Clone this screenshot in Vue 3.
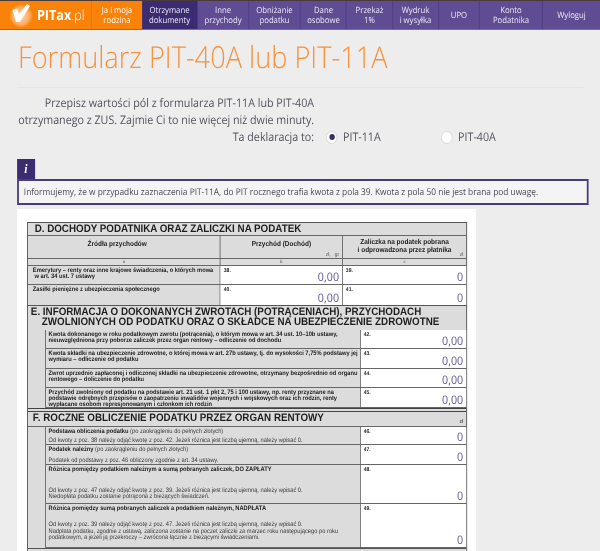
<script setup>
const nav = [
  { t: ['Ja i moja', 'rodzina'], w: 50, c: 'orange' },
  { t: ['Otrzymane', 'dokumenty'], w: 56, c: 'active' },
  { t: ['Inne', 'przychody'], w: 51 },
  { t: ['Obniżanie', 'podatku'], w: 52 },
  { t: ['Dane', 'osobowe'], w: 46 },
  { t: ['Przekaż', '1%'], w: 46 },
  { t: ['Wydruk', 'i wysyłka'], w: 46 },
  { t: ['UPO'], w: 41 },
  { t: ['Konto', 'Podatnika'], w: 63 },
  { t: ['Wyloguj'], w: 58 },
]
const rowsE = [
  { h: 19, n: '42.', v: '0,00', l: ['Kwota dokonanego w roku podatkowym zwrotu (potrącenia), o którym mowa w art. 34 ust. 10–10b ustawy,', 'nieuwzględniona przy poborze zaliczek przez organ rentowy – odliczenie od dochodu'] },
  { h: 20, n: '43.', v: '0,00', l: ['Kwota składki na ubezpieczenie zdrowotne, o której  mowa w art. 27b ustawy, tj. do wysokości 7,75% podstawy jej', 'wymiaru – odliczenie od podatku'] },
  { h: 19, n: '44.', v: '0,00', l: ['Zwrot uprzednio zapłaconej i odliczonej składki na ubezpieczenie zdrowotne, otrzymany bezpośrednio od organu', 'rentowego – doliczenie do podatku'] },
  { h: 20, n: '45.', v: '0,00', l: ['Przychód zwolniony od podatku na podstawie art. 21 ust. 1 pkt 2, 75 i 100 ustawy, np. renty przyznane na', 'podstawie odrębnych przepisów o zaopatrzeniu inwalidów wojennych i wojskowych oraz ich rodzin, renty', 'wypłacane osobom represjonowanym i członkom ich rodzin'] },
]
</script>

<template>
  <div class="viewport">
    <div class="page">
      <header class="nav">
        <div class="logo">
          <svg class="mark" width="33" height="28" viewBox="0 0 33 28">
            <defs>
              <radialGradient id="glow">
                <stop offset="0" stop-color="#fff" stop-opacity=".7" />
                <stop offset=".7" stop-color="#fff" stop-opacity=".35" />
                <stop offset="1" stop-color="#fff" stop-opacity="0" />
              </radialGradient>
            </defs>
            <ellipse cx="16.3" cy="15" rx="13.3" ry="12" fill="url(#glow)" />
            <path d="M6.9 9 L11.9 7.5 L14.1 13 L23 3 L26.3 5 L15.2 21 L10.8 21 Z" fill="#fff" />
          </svg>
          <span class="brand"><b>PITax</b><i>.pl</i></span>
        </div>
        <a v-for="n in nav" :key="n.t[0]" class="item" :class="n.c" :style="{ width: n.w / 0.9 + 'px' }">
          <span v-for="l in n.t" :key="l">{{ l }}</span>
        </a>
      </header>

      <main>
        <h1 class="title">Formularz PIT-40A lub PIT-11A</h1>
        <div class="rule"></div>

        <div class="intro">
          <p>Przepisz wartości pól z formularza PIT-11A lub PIT-40A</p>
          <p>otrzymanego z ZUS. Zajmie Ci to nie więcej niż dwie minuty.</p>
          <div class="choice">
            <span class="label">Ta deklaracja to:</span>
            <span class="radio on"></span><span class="opt first">PIT-11A</span>
            <span class="radio"></span><span class="opt">PIT-40A</span>
          </div>
        </div>

        <div class="badge">i</div>
        <div class="info">Informujemy, że w przypadku zaznaczenia PIT-11A, do PIT rocznego trafia kwota z pola 39. Kwota z pola 50 nie jest brana pod uwagę.</div>

        <section class="sheet">
          <div class="form">
            <div class="sec d">D. DOCHODY PODATNIKA ORAZ ZALICZKI NA PODATEK</div>

            <div class="r3 head">
              <div class="c1"><b>Źródła przychodów</b></div>
              <div class="c2"><b>Przychód (Dochód)</b><span class="unit">zł, &nbsp; gr</span></div>
              <div class="c3"><b>Zaliczka na podatek pobrana<br>i odprowadzona przez płatnika</b><span class="unit">zł</span></div>
            </div>
            <div class="r3 letters">
              <div class="c1">a</div><div class="c2">b</div><div class="c3">c</div>
            </div>
            <div class="r3 data h19">
              <div class="c1 desc ind"><b>Emerytury – renty oraz inne krajowe świadczenia, o których mowa<br>&nbsp;w art. 34 ust. 7 ustawy</b></div>
              <div class="c2 val"><em>38.</em><span class="num">0,00</span></div>
              <div class="c3 val"><em>39.</em><span class="num">0</span></div>
            </div>
            <div class="r3 data h20">
              <div class="c1 desc ind"><b>Zasiłki pieniężne z ubezpieczenia społecznego</b></div>
              <div class="c2 val"><em>40.</em><span class="num">0,00</span></div>
              <div class="c3 val"><em>41.</em><span class="num">0</span></div>
            </div>

            <div class="sec e">E. INFORMACJA O DOKONANYCH ZWROTACH (POTRĄCENIACH), PRZYCHODACH<br><span class="sub">ZWOLNIONYCH OD PODATKU ORAZ O SKŁADCE NA UBEZPIECZENIE ZDROWOTNE</span></div>
            <div class="block">
              <div v-for="r in rowsE" :key="r.n" class="r2" :class="'h' + r.h">
                <div class="lhs desc"><b v-for="t in r.l" :key="t">{{ t }}</b></div>
                <div class="rhs val"><em>{{ r.n }}</em><span class="num">{{ r.v }}</span></div>
              </div>
            </div>

            <div class="sec f">F. ROCZNE OBLICZENIE PODATKU PRZEZ ORGAN RENTOWY<span class="unit">zł</span></div>
            <div class="block">
              <div class="r2 h18">
                <div class="lhs desc spread"><span><b>Podstawa obliczenia podatku</b> (po zaokrągleniu do pełnych złotych)</span><span>Od kwoty z poz. 38 należy odjąć kwotę z poz. 42. Jeżeli różnica jest liczbą ujemną, należy wpisać 0.</span></div>
                <div class="rhs val"><em>46.</em><span class="num">0</span></div>
              </div>
              <div class="r2 h20">
                <div class="lhs desc spread"><span><b>Podatek należny</b> (po zaokrągleniu do pełnych złotych)</span><span>Podatek od podstawy z poz. 46 obliczony zgodnie z art. 34 ustawy.</span></div>
                <div class="rhs val"><em>47.</em><span class="num">0</span></div>
              </div>
              <div class="r2 h39">
                <div class="lhs desc spread"><span><b>Różnica pomiędzy podatkiem należnym a sumą pobranych zaliczek, DO ZAPŁATY</b></span><span>Od kwoty z poz. 47 należy odjąć kwotę z poz. 39. Jeżeli różnica jest liczbą ujemną, należy wpisać 0.<br>Niedopłata podatku zostanie potrącona z bieżących świadczeń.</span></div>
                <div class="rhs val"><em>48.</em><span class="num">0</span></div>
              </div>
              <div class="r2 h44">
                <div class="lhs desc spread"><span><b>Różnica pomiędzy sumą pobranych zaliczek a podatkiem należnym, NADPŁATA</b></span><span>Od kwoty z poz. 39 należy odjąć kwotę z poz. 47. Jeżeli różnica jest liczbą ujemną, należy wpisać 0.<br>Nadpłata podatku, zgodnie z ustawą, zaliczona zostanie na poczet zaliczki za marzec roku następującego po roku<br>podatkowym, a jeżeli ją przekroczy – zwrócona łącznie z bieżącymi świadczeniami.</span></div>
                <div class="rhs val"><em>49.</em><span class="num">0</span></div>
              </div>
            </div>
            <div class="tail"></div>
          </div>
        </section>
      </main>
    </div>
  </div>
</template>

<style>
html, body { margin: 0; background: #ededed; }
</style>

<style scoped>
.viewport {
  width: 600px;
  height: 551px;
  overflow: hidden;
  background: #ededed;
}
.page {
  width: 666.67px;
  height: 551px;
  transform: scaleX(0.9);
  transform-origin: 0 0;
  font-family: "Open Sans", sans-serif;
  text-rendering: geometricPrecision;
  filter: blur(0.35px);
}
.nav {
  display: flex;
  height: 30px;
  border-top: 1px solid #4a3a3a;
  box-sizing: border-box;
  background: #5f4c92;
  border-bottom: 1px solid #7b6aa8;
}
.logo {
  width: 102.2px;
  flex: none;
  background: #fa8208;
  display: flex;
  align-items: center;
  gap: 1px;
  padding-left: 7px;
  box-sizing: border-box;
}
.mark { flex: none; }
.brand { color: #fff; font-size: 14px; white-space: nowrap; }
.brand b { font-weight: 700; }
.brand i { font-style: normal; font-weight: 300; }
.item {
  flex: none;
  box-sizing: border-box;
  display: flex;
  flex-direction: column;
  align-items: center;
  justify-content: center;
  padding-top: 1px;
  color: #ece8f4;
  font-size: 8.6px;
  line-height: 9.6px;
  border-right: 1px solid #4f3e85;
  white-space: nowrap;
}
.item.orange { background: #fa8208; color: #fff; border-right: none; }
.item.active { background: #3b2b70; }
.title {
  margin: 0;
  padding: 6.6px 0 0 20px;
  font-size: 30.2px;
  line-height: 40px;
  font-weight: 300;
  color: #f8923c;
}
.rule { height: 1px; background: #e4e4e4; margin: 10.4px 19px 0; }
.intro { margin-top: 7.5px; width: 349px; height: 50.4px; text-align: right; color: #55525f; font-size: 11.9px; line-height: 16.8px; }
.intro p { margin: 0; white-space: nowrap; }
.choice { display: flex; align-items: center; white-space: nowrap; width: 600px; }
.label { flex: none; width: 349px; text-align: right; }
.radio {
  flex: none;
  box-sizing: border-box;
  width: 13px;
  height: 13px;
  margin-left: 13.4px;
  border-radius: 50%;
  background: #fff;
  border: 1px solid #d8d8d8;
  display: flex;
  align-items: center;
  justify-content: center;
}
.radio.on::after { content: ""; width: 6px; height: 6px; border-radius: 50%; background: #3b2b70; }
.opt { flex: none; margin-left: 5.7px; text-align: left; }
.opt.first { width: 95.8px; }
.badge {
  margin: 13.1px 0 0 18.9px;
  width: 20px;
  height: 20px;
  background: #3b2b70;
  color: #fff;
  font: italic 700 13px/20px "Liberation Serif", serif;
  text-align: center;
}
.info {
  margin-left: 18.9px;
  width: 635.6px;
  height: 26px;
  box-sizing: border-box;
  border: 2px solid #4a3b7c;
  background: #f4f4f4;
  color: #4c4a57;
  font-size: 9.27px;
  line-height: 22px;
  padding-left: 5.6px;
  white-space: nowrap;
}
.sheet {
  margin: 4px 0 0 18.9px;
  width: 510px;
  height: 346px;
  background: #fff;
  padding: 13px 0 0 11.1px;
  box-sizing: border-box;
}
.form {
  width: 489px;
  box-sizing: border-box;
  border: 1px solid #555;
  border-bottom: none;
  background: #dcdcdc;
  font-family: "Liberation Sans", sans-serif;
  color: #222;
}
.sec { font-weight: 700; color: #1d1d1d; white-space: nowrap; position: relative; box-sizing: border-box; font-size: 10.9px; }
.sec.d { height: 13px; line-height: 13px; padding-left: 7.5px; border-bottom: 1px solid #666; }
.sec.e { height: 25px; line-height: 10.5px; padding: 1px 0 0 3.3px; border-top: 1px solid #555; }
.sec.e .sub { margin-left: 12.2px; }
.sec.f { height: 19px; line-height: 13px; padding-left: 5.5px; border-top: 4px double #444; border-bottom: 1px solid #666; }
.sec.f .unit { bottom: 1px; right: 3.3px; }
.r3 { display: grid; grid-template-columns: 214.4px 135.6px 1fr; box-sizing: border-box; }
.r3 > div { border-right: 1px solid #666; position: relative; box-sizing: border-box; }
.r3 > div:last-child { border-right: none; }
.head { height: 23px; text-align: center; font-size: 7.2px; line-height: 8.5px; border-bottom: 1px solid #666; }
.head b { display: block; padding-top: 4px; }
.head .c1 b { padding-right: 15px; }
.head .c3 b { padding-top: 2px; }
.unit { position: absolute; right: 3.3px; bottom: 0; font-size: 5.4px; line-height: 6px; color: #555; }
.letters { height: 7px; font-size: 4.4px; line-height: 6px; text-align: center; color: #444; border-bottom: 1px solid #666; }
.data { border-bottom: 1px solid #666; }
.data.h20 { border-bottom: none; }
.h18 { height: 18px; }
.h19 { height: 19px; }
.h20 { height: 20px; }
.h39 { height: 39px; }
.h44 { height: 44px; }
.desc { font-size: 6.38px; line-height: 6.2px; color: #3a3a3a; }
.desc b { color: #222; font-weight: 700; }
.ind { padding: 2px 0 0 5.5px; white-space: nowrap; overflow: hidden; }
.val { background: #fff; position: relative; }
.val em { position: absolute; left: 3.3px; top: 2px; font-style: normal; font-weight: 700; font-size: 5.6px; line-height: 6px; color: #222; }
.num {
  position: absolute;
  right: 3.3px;
  bottom: 0;
  font-family: "Open Sans", sans-serif;
  font-size: 11.9px;
  line-height: 13px;
  color: #5a4d94;
}
.block { margin-left: 18.9px; border-left: 1px solid #666; }
.r2 { display: grid; grid-template-columns: 350px 1fr; box-sizing: border-box; border-bottom: 1px solid #666; }
.lhs { border-right: 1px solid #666; padding: 2px 0 0 3px; overflow: hidden; white-space: nowrap; box-sizing: border-box; }
.lhs > b { display: block; }
.spread { display: flex; flex-direction: column; justify-content: space-between; }
.h39 .spread { padding-bottom: 3px; }
.h44 .spread { padding-bottom: 6px; }
.tail { height: 5px; border-top: 1px solid #555; background: #dcdcdc; }
</style>
